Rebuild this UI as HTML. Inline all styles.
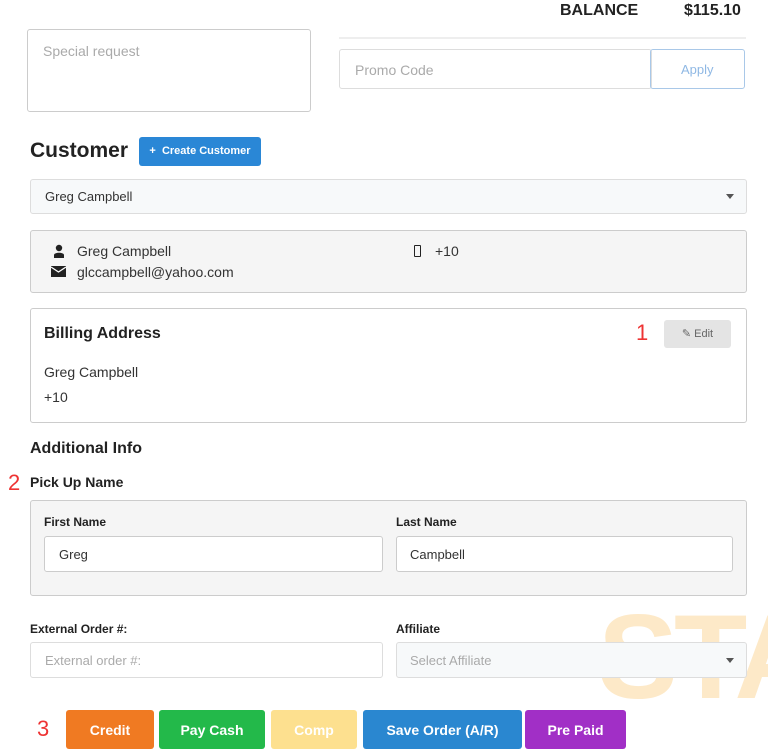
<!DOCTYPE html>
<html style="overflow:hidden;width:768px;height:754px"><head><meta charset="utf-8"><style>
*{box-sizing:border-box;margin:0;padding:0}
body{width:768px;height:754px;background:#fff;font-family:"Liberation Sans",sans-serif;color:#333;position:relative;overflow:hidden}
.a{position:absolute}
.box{position:absolute;border:1px solid #ccc;border-radius:3px}
.ph{color:#aaa;font-size:14px}
.btn{position:absolute;top:710px;height:39px;color:#fff;font-weight:bold;font-size:14px;display:flex;align-items:center;justify-content:center;border-radius:3px}
.lbl{position:absolute;font-size:12px;font-weight:bold;color:#222}
.caret{position:absolute;width:0;height:0;border-left:4px solid transparent;border-right:4px solid transparent;border-top:5px solid #555}
.wm{position:absolute;left:0;top:0;width:768px;height:754px;overflow:hidden}
</style></head><body>
<div class="wm"><div class="a" style="left:598px;top:588px;font-size:120px;font-weight:bold;color:#fde9c8;letter-spacing:-4px;white-space:nowrap">STA</div></div>
<div class="a" style="left:560px;top:2px;font-size:16px;font-weight:bold;color:#222">BALANCE</div>
<div class="a" style="left:684px;top:2px;font-size:16px;font-weight:bold;color:#222">$115.10</div>
<div class="box" style="left:27px;top:29px;width:284px;height:83px"></div>
<div class="a ph" style="left:43px;top:43px">Special request</div>
<div class="a" style="left:339px;top:37px;width:407px;height:2px;background:#eee"></div>
<div class="box" style="left:339px;top:49px;width:313px;height:40px;border-color:#ddd"></div>
<div class="a ph" style="left:355px;top:62px">Promo Code</div>
<div class="box" style="left:650px;top:49px;width:95px;height:40px;border-color:#a9c8e8"></div>
<div class="a" style="left:681px;top:62px;font-size:13px;color:#8fb8e4">Apply</div>
<div class="a" style="left:30px;top:139px;font-size:21px;font-weight:bold;color:#222">Customer</div>
<div class="a" style="left:139px;top:137px;width:122px;height:29px;background:#2a87d6;border-radius:3px;color:#fff;font-size:11px;font-weight:bold;line-height:29px;text-align:center">+&nbsp; Create Customer</div>
<div class="box" style="left:30px;top:179px;width:717px;height:35px;background:#f7f9fa;border-color:#ddd"></div>
<div class="a" style="left:45px;top:189px;font-size:13px;color:#333">Greg Campbell</div>
<div class="caret" style="left:726px;top:194px"></div>
<div class="box" style="left:30px;top:230px;width:717px;height:63px;background:#f5f5f5"></div>
<svg class="a" style="left:52px;top:244px" width="14" height="14" viewBox="0 0 14 14"><circle cx="7" cy="4" r="3.2" fill="#222"/><path d="M2 14v-3c0-3 10-3 10 0v3z" fill="#222"/></svg>
<div class="a" style="left:77px;top:243px;font-size:14px">Greg Campbell</div>
<svg class="a" style="left:51px;top:265px" width="15" height="13" viewBox="0 0 15 13"><rect x="0" y="1" width="15" height="11" fill="#222"/><path d="M0 2l7.5 5 7.5-5" stroke="#fff" stroke-width="1.3" fill="none"/></svg>
<div class="a" style="left:77px;top:264px;font-size:14px">glccampbell@yahoo.com</div>
<div class="a" style="left:414px;top:245px;width:7px;height:12px;border:1.5px solid #222;border-radius:1px"></div>
<div class="a" style="left:435px;top:243px;font-size:14px">+10</div>
<div class="box" style="left:30px;top:308px;width:717px;height:115px"></div>
<div class="a" style="left:44px;top:325px;font-size:16px;font-weight:bold;color:#222">Billing Address</div>
<div class="a" style="left:636px;top:320px;font-size:22px;color:#e33">1</div>
<div class="a" style="left:664px;top:320px;width:67px;height:28px;background:#e4e4e4;border-radius:3px;font-size:11px;color:#666;line-height:28px;text-align:center">✎ Edit</div>
<div class="a" style="left:44px;top:364px;font-size:14px">Greg Campbell</div>
<div class="a" style="left:44px;top:389px;font-size:14px">+10</div>
<div class="a" style="left:30px;top:440px;font-size:16px;font-weight:bold;color:#222">Additional Info</div>
<div class="a" style="left:8px;top:470px;font-size:22px;color:#e33">2</div>
<div class="a" style="left:30px;top:474px;font-size:14px;font-weight:bold;color:#222">Pick Up Name</div>
<div class="box" style="left:30px;top:500px;width:717px;height:96px;background:#f5f5f5"></div>
<div class="lbl" style="left:44px;top:515px">First Name</div>
<div class="lbl" style="left:396px;top:515px">Last Name</div>
<div class="box" style="left:44px;top:536px;width:339px;height:36px;background:#fff"></div>
<div class="a" style="left:59px;top:547px;font-size:13px">Greg</div>
<div class="box" style="left:396px;top:536px;width:337px;height:36px;background:#fff"></div>
<div class="a" style="left:410px;top:547px;font-size:13px">Campbell</div>
<div class="lbl" style="left:30px;top:622px">External Order #:</div>
<div class="lbl" style="left:396px;top:622px">Affiliate</div>
<div class="box" style="left:30px;top:642px;width:353px;height:36px;border-color:#ddd;background:#fff"></div>
<div class="a ph" style="left:45px;top:653px;font-size:13px">External order #:</div>
<div class="box" style="left:396px;top:642px;width:351px;height:36px;background:#f7f9fa;border-color:#ddd"></div>
<div class="a ph" style="left:410px;top:653px;font-size:13px">Select Affiliate</div>
<div class="caret" style="left:726px;top:658px"></div>
<div class="a" style="left:37px;top:716px;font-size:22px;color:#e33">3</div>
<div class="btn" style="left:66px;width:88px;background:#f07a22">Credit</div>
<div class="btn" style="left:159px;width:106px;background:#23b94a">Pay Cash</div>
<div class="btn" style="left:271px;width:86px;background:#fde08f">Comp</div>
<div class="btn" style="left:363px;width:159px;background:#2a87d0">Save Order (A/R)</div>
<div class="btn" style="left:525px;width:101px;background:#a12fc6">Pre Paid</div>
</body></html>
